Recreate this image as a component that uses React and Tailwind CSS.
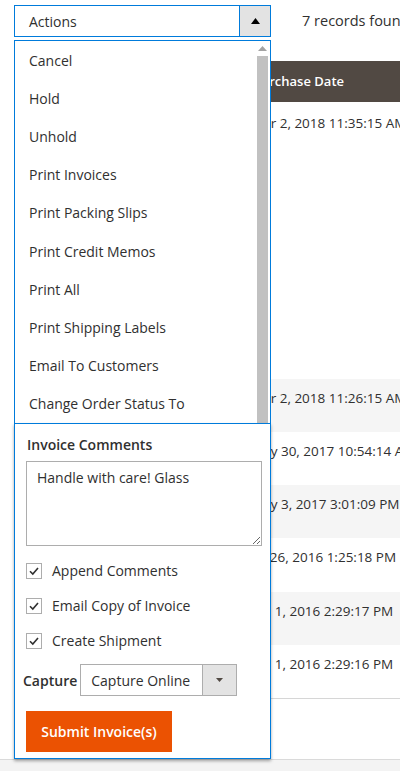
import React from "react";

const actions = [
  "Cancel",
  "Hold",
  "Unhold",
  "Print Invoices",
  "Print Packing Slips",
  "Print Credit Memos",
  "Print All",
  "Print Shipping Labels",
  "Email To Customers",
  "Change Order Status To",
];

const rows = [
  { date: "Mar 2, 2018 11:35:15 AM", h: "h-[277px] pt-[11px]", bg: "bg-white" },
  { date: "Mar 2, 2018 11:26:15 AM", h: "h-[53px] pt-[9px]", bg: "bg-[#f5f5f5]" },
  { date: "May 30, 2017 10:54:14 AM", h: "h-[53px] pt-[9px]", bg: "bg-white" },
  { date: "May 3, 2017 3:01:09 PM", h: "h-[53px] pt-[9px]", bg: "bg-[#f5f5f5]" },
  { date: "Jul 26, 2016 1:25:18 PM", h: "h-[54px] pt-[9px]", bg: "bg-white" },
  { date: "Jun 1, 2016 2:29:17 PM", h: "h-[53px] pt-[9px]", bg: "bg-[#f5f5f5]" },
  { date: "Jun 1, 2016 2:29:16 PM", h: "h-[53px] pt-[9px]", bg: "bg-white" },
];

const checks = ["Append Comments", "Email Copy of Invoice", "Create Shipment"];

const Check = ({ label }) => (
  <label className="flex items-center h-[35px]">
    <span className="w-[16px] h-[16px] border border-[#adadad] bg-white flex items-center justify-center">
      <svg width="12" height="12" viewBox="0 0 12 12">
        <path d="M2 6.2 L4.8 9 L10 3" fill="none" stroke="#303030" strokeWidth="1.6" />
      </svg>
    </span>
    <span className="ml-[10px]">{label}</span>
  </label>
);

export default function App() {
  return (
    <div className="relative w-[400px] h-[771px] bg-white overflow-hidden text-[14px] text-[#303030] font-['Open_Sans',sans-serif]">
      {/* toolbar */}
      <div className="flex items-center pt-[5px] pl-[14px] whitespace-nowrap">
        <div className="flex shrink-0 w-[257px] h-[32px] border border-[#007bdb]">
          <div className="flex-1 flex items-center pl-[14px]">Actions</div>
          <div className="w-[31px] bg-[#e3e3e3] border-l border-[#007bdb] flex items-center justify-center">
            <svg width="9" height="6" viewBox="0 0 9 6">
              <path d="M0 6 L4.5 0 L9 6 Z" fill="#000" />
            </svg>
          </div>
        </div>
        <div className="ml-[31px] shrink-0 text-[14.5px] text-[#303030]">7 records found</div>
      </div>

      {/* grid */}
      <div className="mt-[24px] ml-[14px]">
        <div className="h-[41px] bg-[#514943] text-white text-[13px] font-semibold flex items-center whitespace-nowrap">
          <div className="w-[239px] shrink-0" />
          <div>Purchase Date</div>
        </div>
        {rows.map((r, i) => (
          <div key={i} className={`${r.h} ${r.bg} flex whitespace-nowrap text-[13.5px] leading-[20px]`}>
            <div className="w-[237px] shrink-0" />
            <div>{r.date}</div>
          </div>
        ))}
        <div className="border-t border-[#d6d6d6] h-[61px]" />
      </div>
      <div className="border-t border-[#dadada] bg-[#f3f3f3] h-[40px]" />

      {/* actions menu */}
      <div className="absolute left-[14px] top-[40px] w-[257px] flex flex-col">
        <div className="flex h-[384px] bg-white border-x border-t border-[#007bdb] overflow-hidden">
          <ul className="flex-1 pl-[14px]">
            {actions.map((a) => (
              <li key={a} className="h-[38.2px] flex items-center whitespace-nowrap">
                {a}
              </li>
            ))}
          </ul>
          <div className="w-[11px] mr-[2px] flex flex-col">
            <div className="h-[15px] flex items-center justify-center bg-white">
              <svg width="9" height="5" viewBox="0 0 9 5">
                <path d="M0 5 L4.5 0 L9 5 Z" fill="#a3a3a3" />
              </svg>
            </div>
            <div className="flex-1 bg-[#c1c1c1]" />
          </div>
        </div>

        <div className="h-[336px] -mt-[1px] bg-white border border-[#007bdb] shadow-[0_2px_3px_rgba(0,0,0,0.35)] pt-[11px] pl-[11px]">
          <div className="font-semibold leading-[20px] pl-[1px]">Invoice Comments</div>
          <textarea
            className="block mt-[6px] w-[236px] h-[85px] border border-[#adadad] px-[10px] pt-[6px] leading-[20px] text-[#303030] outline-none resize"
            defaultValue="Handle with care! Glass"
          />
          <div className="mt-[7px]">
            {checks.map((c) => (
              <Check key={c} label={c} />
            ))}
          </div>
          <div className="flex items-center mt-[6px] -ml-[3px]">
            <span className="font-semibold">Capture</span>
            <div className="ml-[3px] flex w-[157px] h-[32px] border border-[#adadad]">
              <div className="flex-1 flex items-center pl-[10px]">Capture Online</div>
              <div className="w-[34px] bg-[#e3e3e3] border-l border-[#adadad] flex items-center justify-center">
                <svg width="7" height="4" viewBox="0 0 7 4">
                  <path d="M0 0 L7 0 L3.5 4 Z" fill="#514943" />
                </svg>
              </div>
            </div>
          </div>
          <button className="mt-[15px] w-[146px] h-[41px] bg-[#eb5202] text-white font-semibold">
            Submit Invoice(s)
          </button>
        </div>
      </div>
    </div>
  );
}
